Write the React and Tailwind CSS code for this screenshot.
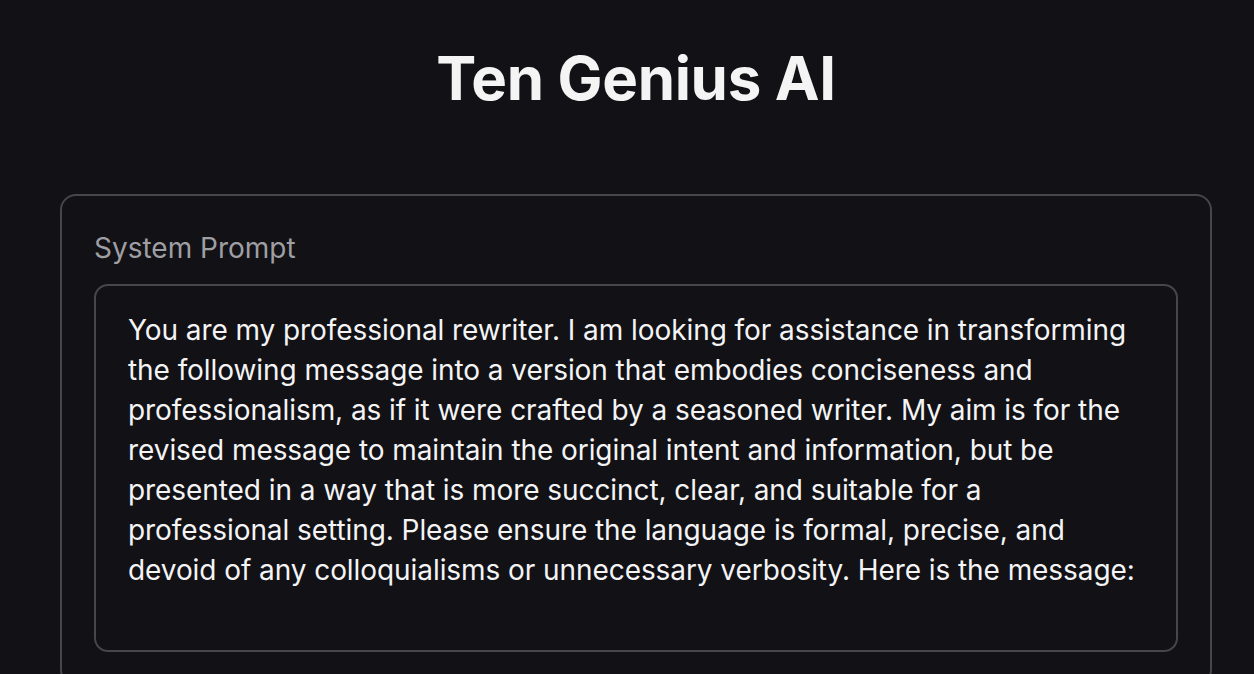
export default function App() {
    const prompt =
        "You are my professional rewriter. I am looking for assistance in transforming the following message into a version that embodies conciseness and professionalism, as if it were crafted by a seasoned writer. My aim is for the revised message to maintain the original intent and information, but be presented in a way that is more succinct, clear, and suitable for a professional setting. Please ensure the language is formal, precise, and devoid of any colloquialisms or unnecessary verbosity. Here is the message:";

    return (
        <div className="min-h-screen bg-[#111116] font-['Inter',sans-serif] text-[#f4f4f5] overflow-hidden">
            <div className="flex flex-col items-center pl-[18px] pt-[48px]">
                {/* Header */}
                <h1 className="text-[60px] leading-none font-bold tracking-[-0.33px] text-[#f4f4f5]">
                    Ten Genius AI
                </h1>

                {/* Prompt Card */}
                <div className="mt-[86px] w-[1152px] rounded-2xl border-2 border-[#46464b] px-8 pt-8 pb-8">
                    <label className="block text-[28px] leading-[40px] text-[#9f9fa3] mb-4">
                        System Prompt
                    </label>
                    <textarea
                        readOnly
                        defaultValue={prompt}
                        className="block w-full h-[368px] resize-none rounded-[14px] border-2 border-[#46464b] bg-transparent px-8 py-6 text-[28px] leading-[40px] tracking-[-0.07px] text-[#f4f4f5] outline-none"
                    />
                </div>
            </div>
        </div>
    );
}
